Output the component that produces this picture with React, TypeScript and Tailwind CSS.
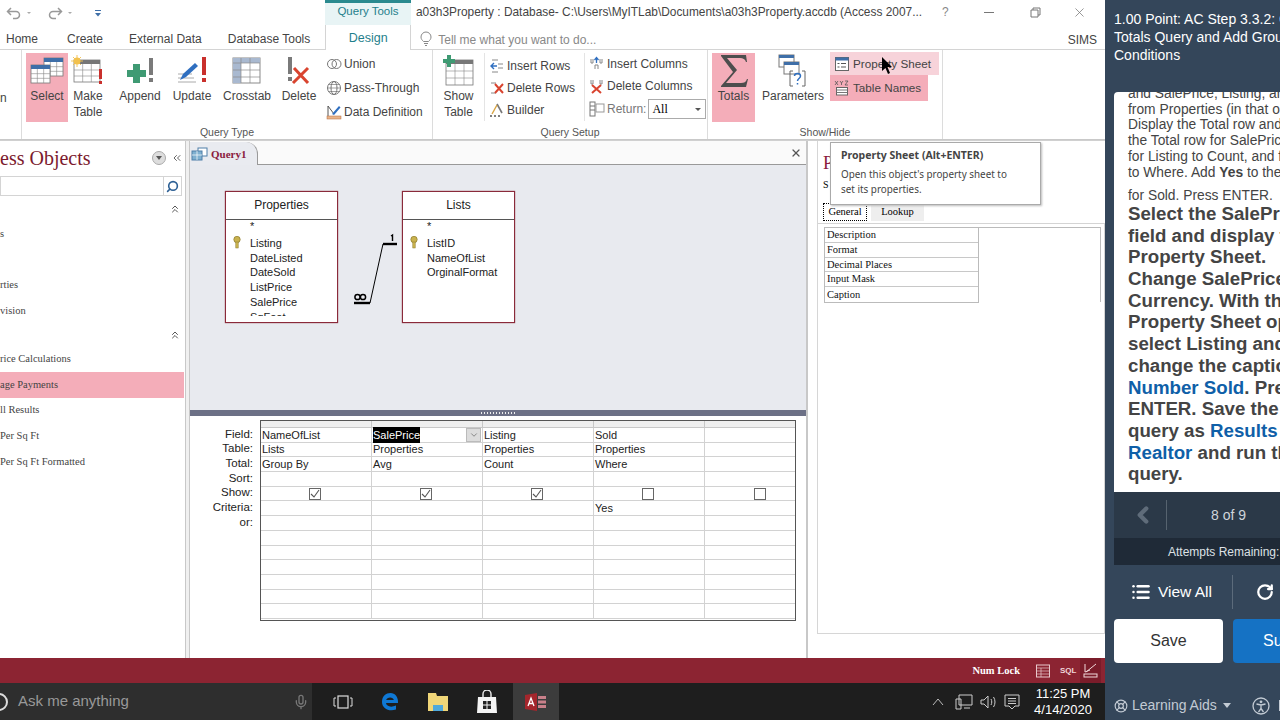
import { ChevronsUp, Search, X, RotateCw, ChevronLeft, ChevronDown, List, ChevronsLeft, Mic, LifeBuoy } from "lucide-react"
import type { ReactNode } from "react"

const fields = [
  { label: "Field:", cells: ["NameOfList", "SalePrice", "Listing", "Sold", ""] },
  { label: "Table:", cells: ["Lists", "Properties", "Properties", "Properties", ""] },
  { label: "Total:", cells: ["Group By", "Avg", "Count", "Where", ""] },
  { label: "Sort:", cells: ["", "", "", "", ""] },
  { label: "Show:", cells: ["", "", "", "", ""] },
  { label: "Criteria:", cells: ["", "", "", "Yes", ""] },
  { label: "or:", cells: ["", "", "", "", ""] },
]

function MiniTable({ x, y, w, h, head = "#5b7fae" }: { x: number; y: number; w: number; h: number; head?: string }) {
  const cw = w / 3
  const rh = (h - 4) / 3
  return (
    <g>
      <rect x={x} y={y} width={w} height={h} fill="#fff" stroke="#777" strokeWidth="0.8" />
      <rect x={x} y={y} width={w} height={4} fill={head} />
      {[1, 2].map((i) => (
        <line key={i} x1={x + cw * i} y1={y + 4} x2={x + cw * i} y2={y + h} stroke="#888" strokeWidth="0.6" />
      ))}
      {[1, 2].map((i) => (
        <line key={i} x1={x} y1={y + 4 + rh * i} x2={x + w} y2={y + 4 + rh * i} stroke="#888" strokeWidth="0.6" />
      ))}
    </g>
  )
}

function SelectIcon() {
  return (
    <svg width="34" height="28" viewBox="0 0 34 28">
      <MiniTable x={14} y={1} w={19} h={18} head="#3f6fa8" />
      <MiniTable x={1} y={8} w={19} h={18} head="#3f6fa8" />
    </svg>
  )
}

function MakeTableIcon() {
  return (
    <svg width="34" height="32" viewBox="0 0 34 32">
      <MiniTable x={3} y={5} w={26} h={22} head="#777" />
      <circle cx="6" cy="6" r="3.5" fill="#f2c14e" />
      <path d="M6 0v12M0 6h12M2 2l8 8M10 2l-8 8" stroke="#f2c14e" strokeWidth="0.9" />
      <rect x="28" y="14" width="3" height="10" fill="#c9302c" />
      <rect x="28" y="26" width="3" height="3" fill="#c9302c" />
    </svg>
  )
}

function AppendIcon() {
  return (
    <svg width="30" height="28" viewBox="0 0 30 28">
      <path d="M8 7h7v6h6v7h-6v6H8v-6H2v-7h6z" fill="#3f9a73" />
      <rect x="24" y="1" width="4" height="17" fill="#7a7a7a" />
      <rect x="24" y="21" width="4" height="4" fill="#7a7a7a" />
    </svg>
  )
}

function UpdateIcon() {
  return (
    <svg width="32" height="30" viewBox="0 0 32 30">
      <path d="M2 18h14M2 22h16M2 26h18" stroke="#aaa" strokeWidth="1" />
      <path d="M4 24l3-6L19 7l3 3-12 11z" fill="#2f6fc0" />
      <rect x="26" y="1" width="4" height="18" fill="#c9302c" />
      <rect x="26" y="22" width="4" height="4" fill="#c9302c" />
    </svg>
  )
}

function CrosstabIcon() {
  return (
    <svg width="30" height="28" viewBox="0 0 30 28">
      <rect x="1" y="1" width="27" height="25" fill="#fff" stroke="#8a8a8a" />
      <rect x="1" y="1" width="27" height="5" fill="#a9b9d0" />
      <rect x="1" y="1" width="8" height="25" fill="#a9b9d0" />
      <path d="M9 1v25M18 1v25M1 6h27M1 13h27M1 20h27" stroke="#8a8a8a" strokeWidth="0.7" />
    </svg>
  )
}

function DeleteIcon() {
  return (
    <svg width="26" height="30" viewBox="0 0 26 30">
      <rect x="2" y="1" width="4" height="17" fill="#7a7a7a" />
      <rect x="2" y="21" width="4" height="4" fill="#7a7a7a" />
      <path d="M8 12l14 15M22 12L7 27" stroke="#d9442f" strokeWidth="3" />
    </svg>
  )
}

function ShowTableIcon() {
  return (
    <svg width="32" height="32" viewBox="0 0 32 32">
      <MiniTable x={3} y={5} w={27} h={25} head="#777" />
      <path d="M4 0h4v4h4v4H8v4H4V8H0V4h4z" fill="#3f9a73" />
    </svg>
  )
}

function ParametersIcon() {
  return (
    <svg width="30" height="34" viewBox="0 0 30 34">
      <rect x="1" y="1" width="15" height="12" fill="#fff" stroke="#777" />
      <rect x="1" y="1" width="15" height="3" fill="#3f6fa8" />
      <rect x="6" y="8" width="15" height="12" fill="#fff" stroke="#777" />
      <rect x="6" y="8" width="15" height="3" fill="#3f6fa8" />
      <path d="M15 17h-3v15h3M24 17h3v15h-3" fill="none" stroke="#666" />
      <path d="M16.500 22c0-3.500 6-3.500 6 0 0 2.500-3 2.500-3 5M19.500 29v1.500" fill="none" stroke="#2f6fc0" strokeWidth="1.5" />
    </svg>
  )
}

function SigmaIcon() {
  return (
    <svg width="28" height="34" viewBox="0 0 28 34">
      <path d="M1 1h25l1 7h-1c-1-3-3-4-6-4H7l10 12L6 29h15c3 0 5-1 6-4h1l-2 8H1v-1l12-14L1 2z" fill="#4d4d4d" />
    </svg>
  )
}

function SmallIcon({ children }: { children: ReactNode }) {
  return (
    <svg width="16" height="16" viewBox="0 0 16 16" className="shrink-0">
      {children}
    </svg>
  )
}

function RibbonButton({ label, width, icon, active, ml = 0 }: { label: ReactNode; width: number; icon: ReactNode; active?: boolean; ml?: number }) {
  return (
    <div
      style={{ width, marginLeft: ml }}
      className={`flex h-[69px] flex-col items-center text-center leading-[15.5px] ${active ? "bg-[#f4adb9]" : ""}`}
    >
      <div className="flex h-[36px] items-center">{icon}</div>
      <div>{label}</div>
    </div>
  )
}

function RowItem({ icon, label }: { icon: ReactNode; label: ReactNode }) {
  return (
    <div className="flex h-[22px] items-center gap-[2px]">
      {icon}
      <span className="whitespace-nowrap">{label}</span>
    </div>
  )
}

function GroupLabel({ text }: { text: string }) {
  return <div className="absolute bottom-0 left-0 right-0 text-center text-[10.5px] leading-[14px] text-[#555]">{text}</div>
}

function Ribbon() {
  return (
    <div className="flex h-[90px] border-b border-[#c9c9c9] bg-white text-[12px] text-[#444]">
      <div className="flex w-[22px] border-r border-[#dcdcdc]">
        <div className="mt-[41px] leading-[15px]">n</div>
      </div>
      {/* Query Type */}
      <div className="relative flex w-[411px] items-start border-r border-[#dcdcdc] pt-[3px]">
        <RibbonButton ml={4} width={42} active label="Select" icon={<SelectIcon />} />
        <RibbonButton ml={2} width={36} label={<>Make<br />Table</>} icon={<MakeTableIcon />} />
        <RibbonButton ml={12} width={44} label="Append" icon={<AppendIcon />} />
        <RibbonButton ml={8} width={44} label="Update" icon={<UpdateIcon />} />
        <RibbonButton ml={8} width={50} label="Crosstab" icon={<CrosstabIcon />} />
        <RibbonButton ml={7} width={40} label="Delete" icon={<DeleteIcon />} />
        <div className="ml-[7px]">
          <RowItem
            label="Union"
            icon={
              <SmallIcon>
                <circle cx="6" cy="8" r="4.5" fill="none" stroke="#777" />
                <circle cx="10.5" cy="8" r="4.5" fill="none" stroke="#777" />
              </SmallIcon>
            }
          />
          <div className="h-[2px]" />
          <RowItem
            label="Pass-Through"
            icon={
              <SmallIcon>
                <circle cx="8" cy="8" r="6.5" fill="none" stroke="#777" />
                <ellipse cx="8" cy="8" rx="3" ry="6.5" fill="none" stroke="#777" />
                <path d="M1.500 8h13M2.500 4.500h11M2.500 11.500h11" stroke="#777" strokeWidth="0.7" />
              </SmallIcon>
            }
          />
          <div className="h-[2px]" />
          <RowItem
            label="Data Definition"
            icon={
              <SmallIcon>
                <path d="M2 2l6 8M2 2v10" stroke="#555" fill="none" />
                <path d="M6 10l7-8 1.500 1.500L8 11z" fill="#2f6fc0" />
                <rect x="1" y="12" width="14" height="3" fill="#e8b48a" stroke="#b46a3c" strokeWidth="0.5" />
              </SmallIcon>
            }
          />
        </div>
        <div className="absolute bottom-0 left-0 w-[410px] text-center text-[10.5px] leading-[14px] text-[#555]">Query Type</div>
      </div>
      {/* Query Setup */}
      <div className="relative flex w-[275px] items-start border-r border-[#dcdcdc] pt-[3px]">
        <RibbonButton ml={4} width={43} label={<>Show<br />Table</>} icon={<ShowTableIcon />} />
        <div className="ml-[4px] mr-[4px] h-[68px] border-l border-[#e4e4e4]" />
        <div className="mt-[2px]">
          <RowItem
            label="Insert Rows"
            icon={
              <SmallIcon>
                <path d="M3 2h6M3 14h6" stroke="#888" />
                <path d="M2 8h6M5 5L2 8l3 3" stroke="#2f6fc0" fill="none" strokeWidth="1.4" />
                <path d="M9 6h5M9 10h5" stroke="#888" />
              </SmallIcon>
            }
          />
          <RowItem
            label="Delete Rows"
            icon={
              <SmallIcon>
                <path d="M2 3h5M2 13h5" stroke="#888" />
                <path d="M6 4l8 9M14 4l-8 9" stroke="#d9442f" strokeWidth="2" />
              </SmallIcon>
            }
          />
          <RowItem
            label="Builder"
            icon={
              <SmallIcon>
                <path d="M8 2l5 9" stroke="#777" strokeWidth="1.6" />
                <path d="M8 3l-5 9" stroke="#d9a441" strokeWidth="1.4" />
                <path d="M1 14h2M5 14h2M9 14h2" stroke="#555" strokeWidth="1.4" />
              </SmallIcon>
            }
          />
        </div>
        <div className="ml-[9px] mr-[4px] h-[68px] border-l border-[#e4e4e4]" />
        <div>
          <RowItem
            label="Insert Columns"
            icon={
              <SmallIcon>
                <path d="M2 3v4h2V3M11 3v4h2V3M6 13V9h3v4" stroke="#888" fill="none" />
                <path d="M7.500 7V2M5.500 4l2-2.500 2 2.500" stroke="#2f6fc0" fill="none" strokeWidth="1.3" />
              </SmallIcon>
            }
          />
          <RowItem
            label="Delete Columns"
            icon={
              <SmallIcon>
                <path d="M2 2v4h2V2M11 2v4h2V2" stroke="#888" fill="none" />
                <path d="M3 7l9 8M12 7l-9 8" stroke="#d9442f" strokeWidth="2" />
              </SmallIcon>
            }
          />
          <div className="flex h-[24px] items-center gap-[2px]">
            <SmallIcon>
              <rect x="1" y="1" width="5" height="14" fill="none" stroke="#777" />
              <rect x="7" y="3" width="8" height="8" fill="#fff" stroke="#999" />
              <path d="M1 5h5M1 9h5" stroke="#777" />
            </SmallIcon>
            <span className="text-[#777]">Return:</span>
            <div className="flex h-[20px] w-[58px] items-center justify-between border border-[#ababab] pl-[3px] pr-[4px] font-['Liberation_Serif'] text-[12px] text-black">
              All
              <span className="h-0 w-0 border-x-[3px] border-t-[3px] border-x-transparent border-t-[#555]" />
            </div>
          </div>
        </div>
        <GroupLabel text="Query Setup" />
      </div>
      {/* Show/Hide */}
      <div className="relative flex w-[235px] items-start border-r border-[#dcdcdc] pt-[3px]">
        <RibbonButton ml={4} width={43} active label="Totals" icon={<SigmaIcon />} />
        <RibbonButton ml={6} width={64} label="Parameters" icon={<ParametersIcon />} />
        <div className="ml-[5px] -mt-[1px] text-[11.7px]">
          <div className="flex h-[23px] w-[109px] items-center gap-[3px] bg-[#f7d3da] pl-[4px]">
            <SmallIcon>
              <rect x="1.500" y="1.500" width="13" height="13" fill="#fff" stroke="#666" />
              <rect x="1.500" y="1.500" width="13" height="3" fill="#3f6fa8" />
              <path d="M3.500 7.500h2M3.500 11h2M7 7.500h5M7 11h5" stroke="#555" />
            </SmallIcon>
            Property Sheet
          </div>
          <div className="flex h-[26px] w-[98px] items-center gap-[3px] bg-[#f4adb9] pl-[4px]">
            <SmallIcon>
              <path d="M1 1l3 4M4 1L1 5M6 1l1.500 2L9 1M7.500 3v2M11 1h3l-3 4h3" fill="none" stroke="#555" strokeWidth="0.8" />
              <rect x="2.500" y="7.500" width="11" height="7.500" fill="#fff" stroke="#666" />
              <path d="M2.500 10h11M2.500 12.500h11" stroke="#777" />
            </SmallIcon>
            Table Names
          </div>
        </div>
        <GroupLabel text="Show/Hide" />
      </div>
    </div>
  )
}

function NavPanel() {
  const row = "flex items-center font-['Liberation_Serif'] text-[10.5px] text-[#444] h-[25.6px]"
  return (
    <div className="flex w-[185px] shrink-0 flex-col bg-white">
      <div className="flex h-[33px] items-center">
        <span className="font-['Liberation_Serif'] text-[20px] text-[#7c1a2e]">ess Objects</span>
        <div className="ml-auto mr-[2px] flex items-center gap-[5px]">
          <span className="flex size-[14px] items-center justify-center rounded-full border border-[#aaa] bg-[#ddd]">
            <span className="h-0 w-0 border-x-[3px] border-t-[4px] border-x-transparent border-t-[#555]" />
          </span>
          <ChevronsLeft size={12} className="text-[#666]" />
        </div>
      </div>
      <div className="mr-[3px] mt-[2px] flex h-[20px] items-center justify-end border border-[#d4d4d4]">
        <div className="flex h-full w-[18px] items-center justify-center border-l border-[#d4d4d4]">
          <Search size={13} strokeWidth={3} className="-scale-x-100 text-[#2c5f94]" />
        </div>
      </div>
      <div className="flex h-[25px] items-center justify-end pr-[4px]">
        <ChevronsUp size={12} className="text-[#555]" />
      </div>
      <div className={row}>s</div>
      <div className={row} />
      <div className={row}>rties</div>
      <div className={row}>vision</div>
      <div className="flex h-[23px] items-center justify-end pr-[4px]">
        <ChevronsUp size={12} className="text-[#555]" />
      </div>
      <div className={row}>rice Calculations</div>
      <div className={`${row} mr-[1px] bg-[#f4adb9]`}>age Payments</div>
      <div className={row}>ll Results</div>
      <div className={row}>Per Sq Ft</div>
      <div className={row}>Per Sq Ft Formatted</div>
    </div>
  )
}

function TableNode({ title, rows, left }: { title: string; rows: string[]; left: number }) {
  return (
    <div style={{ left }} className="absolute top-[26px] h-[132px] w-[113px] overflow-hidden border border-[#8a2a3a] bg-white shadow-[0_0_1px_#8a2a3a]">
      <div className="flex h-[28px] items-center justify-center border-b border-[#555] pb-[2px] text-[12px] text-[#222]">{title}</div>
      <div className="relative h-[96px] overflow-hidden pl-[24px] pt-[1px] text-[11px] leading-[14.7px] text-[#222]">
        <div className="h-[11px] leading-[11px]">*</div>
        <div className="h-[4px]" />
        {rows.map((r) => (
          <div key={r} className="whitespace-nowrap">{r}</div>
        ))}
        <svg width="10" height="13" viewBox="0 0 10 13" className="absolute left-[6px] top-[16px]">
          <circle cx="5" cy="3.500" r="3.200" fill="#c9b24e" stroke="#8c7a2c" strokeWidth="0.7" />
          <rect x="3.800" y="6" width="2.400" height="6" fill="#c9b24e" stroke="#8c7a2c" strokeWidth="0.5" />
        </svg>
      </div>
    </div>
  )
}

function Checkbox({ checked, className }: { checked?: boolean; className: string }) {
  return (
    <span className={`flex size-[12px] items-center justify-center border border-[#666] bg-white ${className}`}>
      {checked && (
        <svg width="10" height="10" viewBox="0 0 10 10">
          <path d="M1 5l3 3 5-7" stroke="#555" fill="none" strokeWidth="1.1" />
        </svg>
      )}
    </span>
  )
}

function QueryGrid() {
  const emptyRows = Array.from({ length: 6 })
  const cols = "grid grid-cols-[111px_111px_111px_111px_1fr]"
  const cell = "flex h-[14.7px] items-center border-r border-b border-[#d2d2d2] pl-[1px] whitespace-nowrap last:border-r-0"
  return (
    <div className="flex flex-1 bg-white pt-[4px] text-[11px] text-[#222]">
      <div className="w-[63px] shrink-0 pt-[7px] text-right">
        {fields.map((f) => (
          <div key={f.label} className="flex h-[14.7px] items-center justify-end text-[11.5px]">{f.label}</div>
        ))}
      </div>
      <div className="ml-[7px] h-[201px] w-[536px] border border-[#555] bg-white">
        <div className={`${cols} h-[7px]`}>
          {[0, 1, 2, 3, 4].map((i) => (
            <div key={i} className="border-r border-b border-[#c8c8c8] bg-[#efefef] last:border-r-0" />
          ))}
        </div>
        {fields.map((f, ri) => (
          <div key={f.label} className={cols}>
            {f.cells.map((c, ci) => (
              <div key={ci} className={`${cell} ${f.label === "Show:" ? "justify-center pl-0" : ""} relative`}>
                {f.label === "Show:" ? (
                  <Checkbox checked={ci < 3} className={ci === 4 ? "ml-[18px]" : "mr-[4px]"} />
                ) : ri === 0 && ci === 1 ? (
                  <>
                    <span className="bg-black text-white">{c}</span>
                    <span className="absolute right-[1px] top-0 flex h-[14px] w-[15px] items-center justify-center border border-[#bbb] bg-[#dcdcdc]">
                      <ChevronDown size={10} className="text-[#777]" />
                    </span>
                  </>
                ) : (
                  c
                )}
              </div>
            ))}
          </div>
        ))}
        {emptyRows.map((_, ri) => (
          <div key={ri} className={cols}>
            {[0, 1, 2, 3, 4].map((ci) => (
              <div key={ci} className={cell} />
            ))}
          </div>
        ))}
      </div>
    </div>
  )
}

function DocArea() {
  return (
    <div className="flex w-[618px] shrink-0 flex-col border-r-2 border-[#c8c8c8]">
      <div className="flex h-[24px] items-end bg-[#fafafa]">
        <div className="flex h-[23px] w-[68px] items-center gap-[3px] rounded-tr-[12px] border-r border-[#999] bg-[#e9ebf0] pl-[1px] pt-[1px] font-['Liberation_Serif'] text-[11px] font-bold text-[#8b1a3e]">
          <svg width="17" height="14" viewBox="0 0 17 14">
            <rect x="7" y="1" width="9" height="8" fill="#fff" stroke="#4f7fa8" />
            <rect x="1" y="4" width="10" height="9" fill="#7fb0d0" stroke="#4f7fa8" />
            <path d="M1 8h10M6 4v9" stroke="#fff" strokeWidth="0.7" />
          </svg>
          Query1
        </div>
        <div className="flex h-[24px] flex-1 items-center justify-end border-b border-[#999] pr-[4px]">
          <X size={12} strokeWidth={2.5} className="text-[#555]" />
        </div>
      </div>
      <div className="relative h-[245px] shrink-0 bg-[#e8eaef]">
        <TableNode title="Properties" left={35} rows={["Listing", "DateListed", "DateSold", "ListPrice", "SalePrice", "SqFoot"]} />
        <TableNode title="Lists" left={212} rows={["ListID", "NameOfList", "OrginalFormat"]} />
        <svg width="60" height="80" viewBox="0 0 60 80" className="absolute left-[160px] top-[65px]">
          <path d="M4 73h16" stroke="#000" strokeWidth="2.400" fill="none" />
          <path d="M20 73L33 14" stroke="#000" strokeWidth="1" fill="none" />
          <path d="M33 14h14" stroke="#000" strokeWidth="2.400" fill="none" />
          <path d="M41 6l1.500-1v6" stroke="#000" strokeWidth="1.400" fill="none" />
          <circle cx="7.500" cy="67" r="2.600" fill="none" stroke="#000" strokeWidth="1.500" />
          <circle cx="13" cy="67" r="2.600" fill="none" stroke="#000" strokeWidth="1.500" />
        </svg>
      </div>
      <div className="flex h-[6px] shrink-0 items-center justify-center bg-[#6c7086]">
        <div className="h-[2px] w-[34px] bg-[repeating-linear-gradient(90deg,#eee_0,#eee_1px,transparent_1px,transparent_3px)]" />
      </div>
      <QueryGrid />
    </div>
  )
}

function PropertyPane() {
  const props = ["Description", "Format", "Decimal Places", "Input Mask", "Caption"]
  return (
    <div className="flex flex-1 pl-[9px]">
      <div className="mb-[24px] flex flex-1 flex-col border-l border-b border-[#d6d6d6] bg-white pl-[5px]">
        <div className="h-[12px]" />
        <div className="font-['Liberation_Serif'] text-[18px] leading-[20px] text-[#8b1a3e]">P</div>
        <div className="mt-[5px] h-[25px] font-['Liberation_Serif'] text-[10px] leading-[14px]">S</div>
        <div className="flex h-[20px] items-start gap-[4px] font-['Liberation_Serif'] text-[10.5px]">
          <div className="flex h-[18px] w-[44px] items-center justify-center border border-dotted border-black">General</div>
          <div className="flex h-[18px] w-[53px] items-center justify-center bg-[#eeeeee]">Lookup</div>
        </div>
        <div className="-ml-[5px] flex-1 border-t border-r border-[#d4d4d4] pl-[6px] pr-[3px] pt-[3px] font-['Liberation_Serif'] text-[10.5px] text-[#111]">
          <div className="flex h-[75px] border-t border-r border-[#bbb]">
            <div className="h-[75px] w-[155px] border-x border-b border-[#bbb]">
              {props.map((p) => (
                <div key={p} className="flex h-[14.8px] items-center border-b border-[#c8c8c8] pl-[2px] last:border-b-0">{p}</div>
              ))}
            </div>
          </div>
        </div>
      </div>
    </div>
  )
}

function Tooltip() {
  return (
    <div className="absolute left-[830px] top-[142px] h-[63px] w-[211px] border border-[#aaa] bg-white px-[10px] pt-[6px] text-[#444] shadow-[1px_1px_2px_#bbb]">
      <div className="text-[10.5px] font-bold leading-[13px]">Property Sheet (Alt+ENTER)</div>
      <div className="mt-[5px] text-[9.9px] leading-[15px]">
        Open this object's property sheet to
        <br />
        set its properties.
      </div>
    </div>
  )
}

function Taskbar() {
  return (
    <div className="flex h-[37px] items-center bg-[#1e1e1e] text-white">
      <div className="flex h-full w-[312px] items-center bg-[#2e2e2e]">
        <div className="-ml-[10px] size-[18px] rounded-full border-2 border-[#ddd]" />
        <span className="ml-[10px] text-[15px] text-[#999]">Ask me anything</span>
        <Mic size={16} className="ml-auto mr-[3px] text-[#777]" />
      </div>
      <svg width="20" height="16" viewBox="0 0 20 16" className="ml-[21px]">
        <rect x="5" y="2" width="10" height="12" fill="none" stroke="#ddd" strokeWidth="1.2" />
        <path d="M3 4H1v8h2M17 4h2v8h-2" fill="none" stroke="#ddd" />
      </svg>
      <svg width="20" height="20" viewBox="0 0 20 20" className="ml-[27px]">
        <path d="M18 11H6c.3 3 4.500 5 10 2.500v4C9 20 2 16.500 2 10 2 4 6 1 10.500 1 15 1 18.500 5 18 11zM6.200 8h7.600c-.3-3.400-7-3.400-7.600 0z" fill="#0f78d4" />
      </svg>
      <svg width="22" height="20" viewBox="0 0 22 20" className="ml-[27px]">
        <path d="M1 1h8l1 3h11v15H1z" fill="#f0d678" />
        <rect x="6" y="13" width="10" height="6" fill="#4fa9dc" />
      </svg>
      <svg width="20" height="24" viewBox="0 0 20 24" className="ml-[28px]">
        <path d="M6 7V4a4 4 0 0 1 8 0v3" fill="none" stroke="#eee" strokeWidth="1.400" />
        <path d="M1 7h18l1 16H0z" fill="#f4f4f4" />
        <path d="M6 11h3.500v3.500H6zM10.500 11H14v3.500h-3.500zM6 15.500h3.500V19H6zM10.500 15.500H14V19h-3.500z" fill="#222" />
      </svg>
      <div className="ml-[16px] flex h-full w-[46px] items-center justify-center bg-[#3c3c3c]">
        <svg width="22" height="18" viewBox="0 0 22 18">
          <path d="M0 2l12-2v18L0 16z" fill="#a4262c" />
          <path d="M3 13l3-8 3 8M4.200 10.500h3.600" fill="none" stroke="#fff" strokeWidth="1.300" />
          <path d="M13 3h8v3h-8zM13 7.500h8v3h-8zM13 12h8v3h-8z" fill="#c9808a" />
        </svg>
      </div>
      <div className="ml-auto flex items-center">
        <svg width="12" height="8" viewBox="0 0 12 8">
          <path d="M1 7l5-6 5 6" fill="none" stroke="#bbb" />
        </svg>
        <svg width="18" height="16" viewBox="0 0 18 16" className="ml-[11px]">
          <path d="M4 1h13v10H4zM1 5h5v10H1zM9 14h6" fill="#1e1e1e" stroke="#ccc" />
        </svg>
        <svg width="18" height="16" viewBox="0 0 18 16" className="ml-[7px]">
          <path d="M1 6h3l4-4v12l-4-4H1zM11 5c1 2 1 4 0 6M13.500 3c2 3 2 7 0 10" fill="none" stroke="#ccc" />
        </svg>
        <svg width="18" height="18" viewBox="0 0 18 18" className="ml-[5px]">
          <path d="M2 2h14v11h-4l-3 3-3-3H2zM5 5.500h8M5 8h8M5 10.500h8" fill="none" stroke="#ccc" />
        </svg>
        <div className="ml-[9px] mr-[9px] w-[66px] text-center text-[13px] leading-[16px] text-white">
          11:25 PM
          <br />
          4/14/2020
        </div>
      </div>
    </div>
  )
}

function StatusBar() {
  return (
    <div className="flex h-[25px] items-center justify-end bg-[#8c2432] pr-[4px] text-white">
      <span className="font-['Liberation_Serif'] text-[10.5px] font-bold">Num Lock</span>
      <svg width="16" height="14" viewBox="0 0 16 14" className="ml-[15px]">
        <rect x="1.500" y="1" width="13" height="12" fill="none" stroke="#e8c8cc" />
        <path d="M1.500 4h13M1.500 7h13M1.500 10h13M6 4v9" stroke="#e8c8cc" strokeWidth="0.7" />
      </svg>
      <span className="ml-[9px] w-[17px] text-[8px] font-bold text-[#f0d8da]">SQL</span>
      <div className="ml-[3px] flex h-full w-[21px] items-center justify-center bg-[#7a1c2a]">
        <svg width="15" height="15" viewBox="0 0 15 15">
          <path d="M2 1v8l5-2M3 9l10-8" fill="none" stroke="#f0d8da" />
          <rect x="1" y="11" width="13" height="3" fill="none" stroke="#f0d8da" />
        </svg>
      </div>
    </div>
  )
}

function TitleRows() {
  return (
    <>
      <div className="flex h-[25px] items-center text-[11.9px] text-[#444]">
        <div className="flex w-[325px] items-center pl-[6px] text-[#999]">
          <svg width="16" height="14" viewBox="0 0 16 14">
            <path d="M5 2L1.500 5.500 5 9M2 5.500h8a3.500 3.500 0 0 1 0 7H7" fill="none" stroke="#999" strokeWidth="1.500" />
          </svg>
          <span className="ml-[5px] h-0 w-0 border-x-[2px] border-t-[2px] border-x-transparent border-t-[#aaa]" />
          <svg width="16" height="14" viewBox="0 0 16 14" className="ml-[16px]">
            <path d="M11 2l3.500 3.500L11 9M14 5.500H6a3.500 3.500 0 0 0 0 7h3" fill="none" stroke="#999" strokeWidth="1.500" />
          </svg>
          <span className="ml-[5px] h-0 w-0 border-x-[2px] border-t-[2px] border-x-transparent border-t-[#aaa]" />
          <svg width="8" height="8" viewBox="0 0 8 8" className="ml-[22px]">
            <path d="M1 1.500h6" stroke="#3f6fa8" />
            <path d="M1 4h6L4 7.500z" fill="#3f6fa8" />
          </svg>
        </div>
        <div className="h-full w-[86px] border-t-[3px] border-[#2a8a8f] bg-[#e8f4f5] text-center text-[11.5px] leading-[17px] text-[#1f7f8c]">Query Tools</div>
        <div className="ml-[5px] whitespace-nowrap">a03h3Property : Database- C:\Users\MyITLab\Documents\a03h3Property.accdb (Access 2007...</div>
        <span className="ml-[20px] text-[#888]">?</span>
        <div className="ml-[35px] h-px w-[10px] bg-[#777]" />
        <svg width="11" height="11" viewBox="0 0 11 11" className="ml-[36px]">
          <path d="M1 3h7v7H1zM3 3V1h7v7H8" fill="none" stroke="#777" />
        </svg>
        <X size={15} strokeWidth={1.2} className="ml-[31px] text-[#777]" />
      </div>
      <div className="flex h-[25px] items-center border-b border-[#d4d4d4] pt-[3px] text-[12px] text-[#444]">
        <span className="ml-[6px]">Home</span>
        <span className="ml-[29px]">Create</span>
        <span className="ml-[26px]">External Data</span>
        <span className="ml-[26px]">Database Tools</span>
        <div className="-mt-[3px] ml-[15px] flex h-[25px] w-[86px] items-center justify-center border-x border-[#d4d4d4] bg-white pt-[3px] text-[12.5px] text-[#1f7f8c]">Design</div>
        <svg width="12" height="15" viewBox="0 0 12 15" className="ml-[9px]">
          <path d="M3.500 10.500C2 9 1 8 1 6a5 5 0 0 1 10 0c0 2-1 3-2.500 4.500zM4 12.500h4M5 14.500h2" fill="none" stroke="#888" />
        </svg>
        <span className="ml-[6px] translate-y-px text-[#888]">Tell me what you want to do...</span>
        <span className="ml-auto mr-[8px] translate-y-px">SIMS</span>
      </div>
    </>
  )
}

function AccessWindow() {
  return (
    <div className="flex w-[1105px] shrink-0 flex-col bg-white font-['Liberation_Sans',sans-serif]">
      <TitleRows />
      <Ribbon />
      <div className="flex h-[518px] overflow-hidden border-t border-[#d0d0d0]">
        <NavPanel />
        <div className="w-[5px] shrink-0 border-x border-[#c8c8c8] bg-[#f0f0f0]" />
        <DocArea />
        <PropertyPane />
      </div>
      <StatusBar />
      <Taskbar />
    </div>
  )
}

function SidePanel() {
  return (
    <div className="flex w-[175px] shrink-0 flex-col overflow-hidden bg-[#34465a] pl-[9px] font-['Liberation_Sans',sans-serif]">
      <div className="h-[92px] w-[260px] pt-[10px] text-[14px] leading-[18px] text-white">
        1.00 Point: AC Step 3.3.2: Create a
        <br />
        Totals Query and Add Group
        <br />
        Conditions
      </div>
      <div className="h-[400px] w-[300px] overflow-hidden rounded-tl-[4px] bg-white pl-[14px] whitespace-nowrap text-[#444]">
        <div className="-mt-[6px] text-[13.8px] leading-[15.7px]">
          <div>and SalePrice, Listing, and</div>
          <div>from Properties (in that order).</div>
          <div>Display the Total row and</div>
          <div>the Total row for SalePrice</div>
          <div>for Listing to Count, and for</div>
          <div>
            to Where. Add <b>Yes</b> to the
          </div>
          <div className="mt-[8px]">for Sold. Press ENTER.</div>
        </div>
        <div className="mt-[-1px] text-[18.7px] font-bold leading-[21.7px]">
          <div>Select the SalePrice</div>
          <div>field and display the</div>
          <div>Property Sheet.</div>
          <div>Change SalePrice to</div>
          <div>Currency. With the</div>
          <div>Property Sheet open,</div>
          <div>select Listing and</div>
          <div>change the caption</div>
          <div>
            <span className="text-[#0f5fa8]">Number Sold</span>. Press
          </div>
          <div>ENTER. Save the</div>
          <div>
            query as <span className="text-[#0f5fa8]">Results by</span>
          </div>
          <div>
            <span className="text-[#0f5fa8]">Realtor</span> and run the
          </div>
          <div>query.</div>
        </div>
      </div>
      <div className="flex h-[46px] w-[200px] items-center bg-[#2b3948]">
        <ChevronLeft size={26} strokeWidth={4} className="ml-[16px] text-[#5f6c7a]" />
        <div className="ml-[10px] h-[30px] border-l border-[#56636f]" />
        <span className="ml-[44px] text-[14px] text-[#cfd4da]">8 of 9</span>
      </div>
      <div className="flex h-[27px] w-[200px] items-center whitespace-nowrap bg-[#1f2a37] pl-[54px] text-[12px] text-[#dde1e5]">Attempts Remaining: 3</div>
      <div className="mt-[10px] flex h-[34px] w-[200px] items-center text-white">
        <List size={20} strokeWidth={3} className="ml-[17px]" />
        <span className="ml-[7px] text-[15.5px]">View All</span>
        <div className="ml-[20px] h-[34px] border-l border-[#5c6b7b]" />
        <RotateCw size={18} strokeWidth={3} className="ml-[23px]" />
      </div>
      <div className="mt-[10px] flex h-[44px] w-[240px] gap-[10px]">
        <div className="flex w-[109px] items-center justify-center rounded-[4px] bg-white text-[16px] text-[#333]">Save</div>
        <div className="flex w-[110px] items-center justify-center rounded-[4px] bg-[#1572c4] text-[16px] text-white">Submit</div>
      </div>
      <div className="mt-[32px] flex w-[200px] items-center whitespace-nowrap text-[14px] text-[#c3cbd4]">
        <LifeBuoy size={14} className="shrink-0" />
        <span className="ml-[4px]">Learning Aids</span>
        <span className="ml-[6px] h-0 w-0 border-x-[4px] border-t-[5px] border-x-transparent border-t-[#c3cbd4]" />
        <svg width="18" height="18" viewBox="0 0 18 18" className="ml-[21px] shrink-0">
          <circle cx="9" cy="9" r="8" fill="none" stroke="#c3cbd4" strokeWidth="1.300" />
          <circle cx="9" cy="4.800" r="1.400" fill="#c3cbd4" />
          <path d="M4.500 7l4.500 1 4.500-1M9 8v3.500l-2.500 3.500M9 11.500l2.500 3.500" fill="none" stroke="#c3cbd4" strokeWidth="1.300" />
        </svg>
        <div className="ml-[9px] size-[11px] border border-[#c3cbd4]" />
      </div>
    </div>
  )
}

export default function App() {
  return (
    <div className="relative flex h-[720px] w-[1280px] overflow-hidden">
      <AccessWindow />
      <SidePanel />
      <Tooltip />
      <svg width="12" height="18" viewBox="0 0 12 18" className="absolute left-[881px] top-[57px]">
        <path d="M1 0v14l3.500-3 2.500 6 2-1-2.500-6H11z" fill="#000" />
      </svg>
    </div>
  )
}
